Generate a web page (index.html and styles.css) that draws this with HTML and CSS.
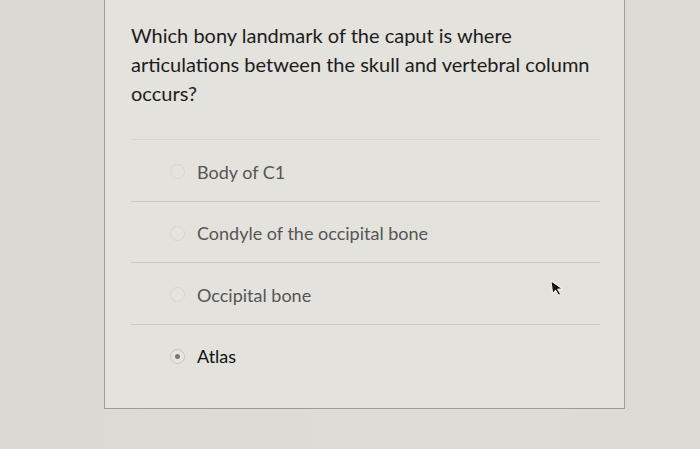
FILE: index.html
```html
<!DOCTYPE html>
<html>
<head>
<meta charset="utf-8">
<link rel="stylesheet" href="styles.css">
</head>
<body>
<div class="page">
  <div class="card">
    <p class="question">Which bony landmark of the caput is where articulations between the skull and vertebral column occurs?</p>
    <ul class="options">
      <li class="option first"><span class="radio"></span><span class="label">Body of C1</span></li>
      <li class="option"><span class="radio"></span><span class="label">Condyle of the occipital bone</span></li>
      <li class="option"><span class="radio"></span><span class="label">Occipital bone</span></li>
      <li class="option selected"><span class="radio"><span class="dot"></span></span><span class="label">Atlas</span></li>
    </ul>
  </div>
  <svg class="cursor" width="14" height="18" viewBox="0 0 14 18">
    <path d="M1 1 L1 14 L4.2 11 L6.6 16.4 L8.8 15.4 L6.5 10.2 L11 10.2 Z" fill="#111" stroke="#f4f4f2" stroke-width="1" stroke-linejoin="round"/>
  </svg>
</div>
</body>
</html>
```
FILE: styles.css
```css
html, body {
  margin: 0;
  padding: 0;
  background: #dddcd7;
}
.page {
  position: relative;
  width: 700px;
  height: 449px;
  overflow: hidden;
  background: linear-gradient(90deg, #dbdad5 0%, #dedcd7 60%, #dcdbd6 100%);
}
.card {
  margin-left: 104px;
  width: 521px;
  height: 409px;
  box-sizing: border-box;
  border: 1.5px solid #9c9c99;
  border-top: none;
  background: #e3e2dd;
  padding: 21px 26px 0 26px;
}
.question {
  margin: 0;
  font-family: Lato, "Open Sans", sans-serif;
  font-size: 20px;
  line-height: 29px;
  color: #1c1c1c;
  width: 470px;
}
.options {
  list-style: none;
  margin: 31px 0 0 0;
  padding: 0;
  width: 469px;
}
.option {
  display: flex;
  align-items: center;
  height: 61.5px;
  padding-top: 3px;
  box-sizing: border-box;
  border-top: 1.5px solid #c9c8c3;
  font-family: Lato, "Open Sans", sans-serif;
  font-size: 18px;
  color: #555555;
}
.option.first {
  border-top-color: #d6d5d0;
}
.radio {
  width: 13px;
  height: 13px;
  border-radius: 50%;
  border: 1px solid #d6d5d0;
  background: #e4e3de;
  margin-left: 39px;
  margin-right: 12px;
  display: flex;
  align-items: center;
  justify-content: center;
  flex: none;
}
.selected .radio {
  border: 1.5px solid #c3c2bd;
  background: #e6e5e1;
}
.dot {
  width: 5px;
  height: 5px;
  border-radius: 50%;
  background: #777;
}
.selected .label {
  color: #111;
}
.cursor {
  position: absolute;
  left: 551px;
  top: 279px;
  transform: rotate(-8deg);
}
```
